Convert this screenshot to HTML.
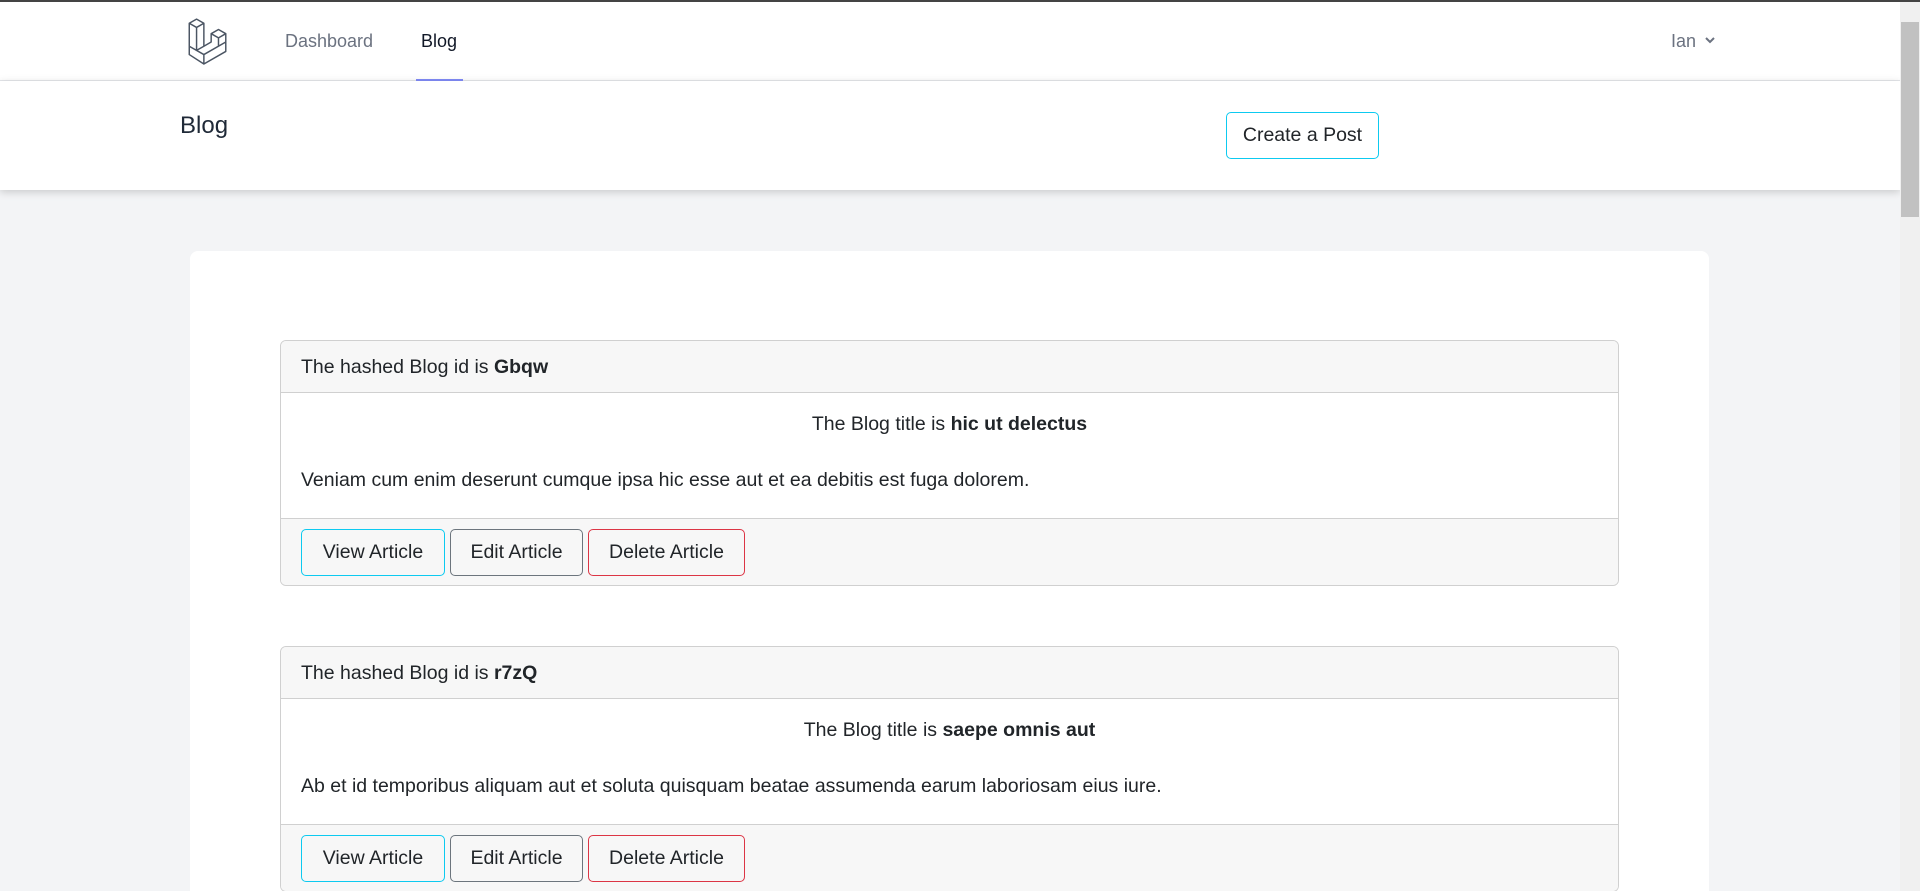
<!DOCTYPE html>
<html><head><meta charset="utf-8"><style>
*{box-sizing:border-box;margin:0;padding:0}
html,body{width:1920px;height:891px;overflow:hidden}
body{background:#f3f4f6;font-family:"Liberation Sans",sans-serif;color:#212529;position:relative}
.top{position:absolute;left:0;top:0;width:1920px;height:2px;background:#444;z-index:5}
.nav{position:absolute;left:0;top:0;width:1900px;height:81px;background:#fff;border-bottom:1px solid #e5e7eb}
.hdr{position:absolute;left:0;top:81px;width:1900px;height:109px;background:#fff;box-shadow:0 2px 8px rgba(0,0,0,.18)}
.sb{position:absolute;left:1900px;top:0;width:20px;height:891px;background:#f0f0f0}
.sb i{position:absolute;left:1px;top:22px;width:18px;height:195px;background:#c1c1c1}
.abs{position:absolute;white-space:nowrap}
.btn{position:absolute;border:1px solid;border-radius:5px;font-size:19.5px;display:flex;align-items:center;justify-content:center;color:#212529}
.main{position:absolute;left:190px;top:251px;width:1519px;height:700px;background:#fff;border-radius:8px}
.card{position:absolute;left:280px;width:1339px;border:1px solid #d0d0d0;border-radius:6px;background:#fff;overflow:hidden}
.ch{height:52px;background:#f7f7f7;border-bottom:1px solid #d0d0d0;padding-left:20px;font-size:19.5px;line-height:52px}
.cb{height:125px;position:relative;font-size:19.5px}
.cf{height:68px;background:#f7f7f7;border-top:1px solid #d0d0d0;position:relative}
</style></head><body>
<div class="top"></div>
<div class="nav">
<svg class="abs" style="left:184px;top:17px" width="46" height="48" viewBox="0 0 38 46" fill="none" stroke="#4b5563" stroke-width="1.4" stroke-linejoin="round">
<path d="M2 6 L9 2 L16 6 L16 28 L23 24 L23 16 L30 12 L37 16 L37 24 L16 36 L2 28 Z M2 6 L9 10 L16 6 M9 10 L9 32 M16 28 L9 32 M23 16 L30 20 L37 16 M30 20 L30 28 M9 32 L16 36 L16 45 M2 28 L2 36 L16 45 L37 33 L37 24"/>
</svg>
<div class="abs" style="left:285px;top:31px;font-size:18px;color:#6b7280">Dashboard</div>
<div class="abs" style="left:421px;top:31px;font-size:18px;color:#111827">Blog</div>
<div class="abs" style="left:416px;top:79px;width:47px;height:2px;background:#818cf8"></div>
<div class="abs" style="left:1671px;top:31px;font-size:18px;color:#6b7280">Ian</div>
<svg class="abs" style="left:1704px;top:35px" width="12" height="10" viewBox="0 0 12 10"><path d="M2 3 L6 7 L10 3" stroke="#6b7280" stroke-width="2" fill="none"/></svg>
</div>
<div class="hdr">
<div class="abs" style="left:180px;top:31px;font-size:24px;color:#1f2937">Blog</div>
<div class="btn" style="left:1226px;top:31px;width:153px;height:47px;border-color:#0dcaf0">Create a Post</div>
</div>
<div class="main"></div>
<div class="card" style="top:340px;height:246px">
<div class="ch">The hashed Blog id is <b>Gbqw</b></div>
<div class="cb"><div class="abs" style="left:0;width:100%;text-align:center;top:20px">The Blog title is <b>hic ut delectus</b></div><div class="abs" style="left:20px;top:76px">Veniam cum enim deserunt cumque ipsa hic esse aut et ea debitis est fuga dolorem.</div></div>
<div class="cf"><div class="btn" style="left:20px;top:10px;width:144px;height:47px;border-color:#0dcaf0">View Article</div><div class="btn" style="left:169px;top:10px;width:133px;height:47px;border-color:#6c757d">Edit Article</div><div class="btn" style="left:307px;top:10px;width:157px;height:47px;border-color:#dc3545">Delete Article</div></div>
</div>
<div class="card" style="top:646px;height:246px">
<div class="ch">The hashed Blog id is <b>r7zQ</b></div>
<div class="cb"><div class="abs" style="left:0;width:100%;text-align:center;top:20px">The Blog title is <b>saepe omnis aut</b></div><div class="abs" style="left:20px;top:76px">Ab et id temporibus aliquam aut et soluta quisquam beatae assumenda earum laboriosam eius iure.</div></div>
<div class="cf"><div class="btn" style="left:20px;top:10px;width:144px;height:47px;border-color:#0dcaf0">View Article</div><div class="btn" style="left:169px;top:10px;width:133px;height:47px;border-color:#6c757d">Edit Article</div><div class="btn" style="left:307px;top:10px;width:157px;height:47px;border-color:#dc3545">Delete Article</div></div>
</div>
<div class="sb"><i></i></div>
</body></html>
